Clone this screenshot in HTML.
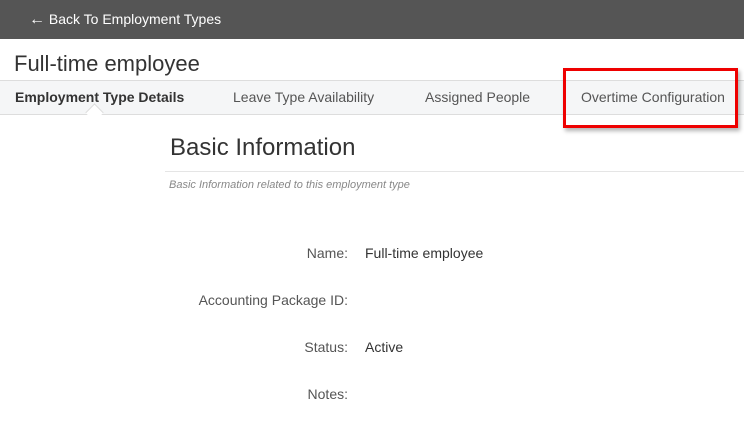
<!DOCTYPE html>
<html><head><style>
body{margin:0;width:744px;height:446px;background:#fff;font-family:"Liberation Sans",sans-serif;position:relative;overflow:hidden;color:#333}
.hdr{position:absolute;left:0;top:0;width:744px;height:39px;background:#555;color:#fff;font-size:14px}
.hdr span{position:absolute;left:29px;top:11px}
.title{position:absolute;left:14px;top:51px;font-size:22px;color:#333}
.tabs{position:absolute;left:0;top:80px;width:744px;height:33px;background:#f5f6f7;border-top:1px solid #ddd;border-bottom:1px solid #ddd;font-size:14px;color:#555}
.tabs span{position:absolute;top:8px}
.caret{position:absolute;left:88px;top:106px;width:12px;height:12px;background:#fff;border-left:1px solid #ddd;border-top:1px solid #ddd;transform:rotate(45deg)}
.red{position:absolute;left:563px;top:68px;width:169px;height:54px;border:3px solid #e00;box-shadow:2px 3px 4px rgba(0,0,0,.3)}
.h2{position:absolute;left:170px;top:134px;font-size:24px;color:#333}
.line{position:absolute;left:165px;top:171px;width:579px;height:1px;background:#e5e5e5}
.sub{position:absolute;left:169px;top:179px;font-size:11px;font-style:italic;color:#888}
.l{position:absolute;right:396px;font-size:14px;color:#555}
.v{position:absolute;left:365px;font-size:14px;color:#333}
</style></head><body>
<div class="hdr"><span><span style="position:static;font-size:16px">←</span> Back To Employment Types</span></div>
<div class="title">Full-time employee</div>
<div class="tabs">
<span style="left:15px;font-weight:bold;color:#333">Employment Type Details</span>
<span style="left:233px">Leave Type Availability</span>
<span style="left:425px">Assigned People</span>
<span style="left:581px">Overtime Configuration</span>
</div>
<div class="caret"></div>
<div class="red"></div>
<div class="h2">Basic Information</div>
<div class="line"></div>
<div class="sub">Basic Information related to this employment type</div>
<div class="l" style="top:245px">Name:</div><div class="v" style="top:245px">Full-time employee</div>
<div class="l" style="top:292px">Accounting Package ID:</div>
<div class="l" style="top:339px">Status:</div><div class="v" style="top:339px">Active</div>
<div class="l" style="top:386px">Notes:</div>
</body></html>
